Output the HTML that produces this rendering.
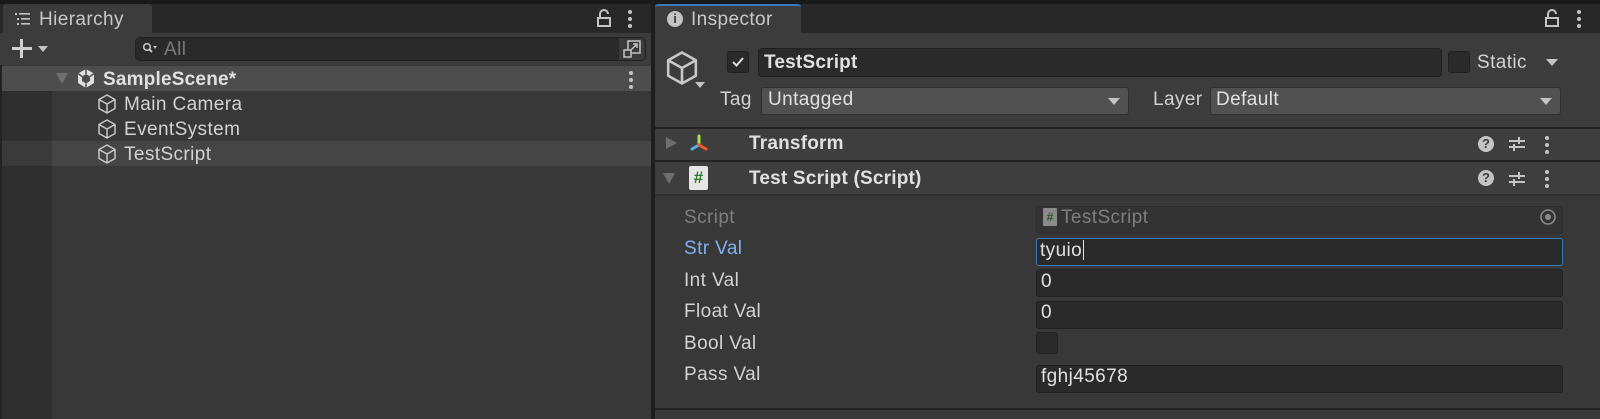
<!DOCTYPE html>
<html><head><meta charset="utf-8"><style>
*{box-sizing:border-box;margin:0;padding:0}
body{width:1600px;height:419px;background:#191919;position:relative;overflow:hidden;font-family:"Liberation Sans",sans-serif;color:#d2d2d2;font-size:19px;letter-spacing:0.4px}
.a{position:absolute}
.t{position:absolute;white-space:nowrap;line-height:1}
.fld{position:absolute;background:#2a2a2a;border:1px solid #212121;border-radius:3px}
.dd{position:absolute;background:#515151;border:1px solid #303030;border-radius:3px}
.tri{position:absolute;width:0;height:0;border-left:6px solid transparent;border-right:6px solid transparent;border-top:7px solid #c4c4c4}
.dots{position:absolute;width:4px}
.dots i{display:block;width:4px;height:4px;border-radius:2px;background:#c4c4c4;margin-bottom:3px}
</style></head><body>
<div class="a" style="left:0;top:4px;width:651px;height:29px;background:#282828"></div>
<div class="a" style="left:3px;top:4px;width:149px;height:30px;background:#3c3c3c;border-radius:3px 3px 0 0"></div>
<svg class="a" style="left:14px;top:11px" width="18" height="16" viewBox="0 0 18 16"><g fill="#c4c4c4"><rect x="1" y="2" width="2" height="2"/><rect x="5" y="2" width="11" height="1.6"/><rect x="3" y="7" width="2" height="2"/><rect x="7" y="7" width="9" height="1.6"/><rect x="3" y="12" width="2" height="2"/><rect x="7" y="12" width="9" height="1.6"/></g></svg>
<div class="t" style="left:39px;top:10px;color:#c8c8c8">Hierarchy</div>
<svg class="a" style="left:596px;top:9px" width="16" height="18" viewBox="0 0 16 18"><path d="M4 8V5a4 4 0 0 1 8 0" fill="none" stroke="#c4c4c4" stroke-width="2"/><rect x="2" y="9" width="12" height="8" fill="none" stroke="#c4c4c4" stroke-width="2"/></svg>
<div class="dots" style="left:628px;top:10px"><i></i><i></i><i></i></div>
<div class="a" style="left:0;top:33px;width:651px;height:32px;background:#3c3c3c"></div>
<div class="a" style="left:12px;top:47px;width:20px;height:3px;background:#d0d0d0"></div>
<div class="a" style="left:20px;top:39px;width:3px;height:19px;background:#d0d0d0"></div>
<div class="tri" style="left:38px;top:46px;border-left-width:5px;border-right-width:5px;border-top-width:6px"></div>
<div class="fld" style="left:135px;top:37px;width:511px;height:24px;border-radius:5px;background:#2a2a2a"></div>
<svg class="a" style="left:142px;top:42px" width="16" height="14" viewBox="0 0 16 14"><circle cx="5" cy="5" r="3.3" fill="none" stroke="#c4c4c4" stroke-width="1.6"/><path d="M7.5 7.5L10 10" stroke="#c4c4c4" stroke-width="2"/><path d="M11 4h4l-2 3z" fill="#c4c4c4"/></svg>
<div class="t" style="left:164px;top:40px;color:#7a7a7a">All</div>
<div class="a" style="left:619px;top:38px;width:26px;height:22px;background:#3a3a3a;border-radius:0 4px 4px 0"></div>
<svg class="a" style="left:622px;top:39px" width="20" height="20" viewBox="0 0 20 20"><rect x="6" y="2" width="12" height="12" fill="none" stroke="#c4c4c4" stroke-width="1.5"/><rect x="2" y="11" width="7" height="7" fill="#3a3a3a" stroke="#c4c4c4" stroke-width="1.5"/><path d="M9 11l6-6M11 5h4v4" fill="none" stroke="#c4c4c4" stroke-width="1.5"/></svg>
<div class="a" style="left:0;top:65px;width:651px;height:354px;background:#383838"></div>
<div class="a" style="left:0;top:65px;width:2px;height:354px;background:#232323"></div>
<div class="a" style="left:2px;top:91px;width:50px;height:328px;background:#2f2f2f"></div>
<div class="a" style="left:2px;top:66px;width:649px;height:25px;background:#4d4d4d"></div>
<div class="a" style="left:52px;top:141px;width:599px;height:25px;background:#454545"></div>
<div class="a" style="left:2px;top:141px;width:50px;height:25px;background:#3a3a3a"></div>
<div class="tri" style="left:56px;top:73px;border-left-width:6px;border-right-width:6px;border-top:11px solid #6e6e6e"></div>
<svg class="a" style="left:76px;top:68px" width="20" height="21" viewBox="0 0 20 21"><path d="M10 1L18 5.5V15L10 20 2 15V5.5Z" fill="#e0e0e0"/><path d="M10 6L14 8.5V13L10 15.5 6 13V8.5Z" fill="#4d4d4d"/><path d="M10 1v5M2 5.5l4 3M18 5.5l-4 3M10 15.5V20" stroke="#4d4d4d" stroke-width="1.5"/></svg>
<div class="t" style="left:103px;top:70px;font-weight:bold;color:#e0e0e0;letter-spacing:0.2px">SampleScene*</div>
<div class="dots" style="left:629px;top:71px"><i></i><i></i><i></i></div>
<svg width="0" height="0" style="position:absolute"><defs><symbol id="cube" viewBox="0 0 22 22"><path d="M11 2L19 6.5V15.5L11 20 3 15.5V6.5Z M3 6.5L11 11 19 6.5 M11 11V20" fill="none" stroke="#c8c8c8" stroke-width="1.5" stroke-linejoin="round"/></symbol></defs></svg>
<svg class="a" style="left:96px;top:93px" width="22" height="22"><use href="#cube"/></svg>
<div class="t" style="left:124px;top:95px">Main Camera</div>
<svg class="a" style="left:96px;top:118px" width="22" height="22"><use href="#cube"/></svg>
<div class="t" style="left:124px;top:120px">EventSystem</div>
<svg class="a" style="left:96px;top:143px" width="22" height="22"><use href="#cube"/></svg>
<div class="t" style="left:124px;top:145px">TestScript</div>
<div class="a" style="left:655px;top:4px;width:945px;height:29px;background:#282828"></div>
<div class="a" style="left:655px;top:4px;width:146px;height:30px;background:#3c3c3c;border-top:2px solid #3a79bb;border-radius:3px 3px 0 0"></div>
<div class="a" style="left:667px;top:11px;width:16px;height:16px;border-radius:8px;background:#c4c4c4;color:#3c3c3c;font-size:13px;font-weight:bold;text-align:center;line-height:16px;letter-spacing:0">i</div>
<div class="t" style="left:691px;top:10px;color:#c8c8c8">Inspector</div>
<svg class="a" style="left:1544px;top:9px" width="16" height="18" viewBox="0 0 16 18"><path d="M4 8V5a4 4 0 0 1 8 0" fill="none" stroke="#c4c4c4" stroke-width="2"/><rect x="2" y="9" width="12" height="8" fill="none" stroke="#c4c4c4" stroke-width="2"/></svg>
<div class="dots" style="left:1577px;top:10px"><i></i><i></i><i></i></div>
<div class="a" style="left:655px;top:33px;width:945px;height:94px;background:#3c3c3c"></div>
<svg class="a" style="left:663px;top:49px" width="38" height="38" viewBox="0 0 22 22"><use href="#cube"/></svg>
<div class="tri" style="left:695px;top:82px;border-left-width:5px;border-right-width:5px;border-top-width:6px"></div>
<div class="a" style="left:727px;top:51px;width:22px;height:22px;background:#2a2a2a;border:1px solid #212121;border-radius:3px"></div>
<svg class="a" style="left:731px;top:55px" width="14" height="14" viewBox="0 0 14 14"><path d="M2 7l3.5 3.5L12 3" fill="none" stroke="#e0e0e0" stroke-width="2"/></svg>
<div class="fld" style="left:758px;top:48px;width:684px;height:29px;border-radius:4px"></div>
<div class="t" style="left:764px;top:53px;font-weight:bold;color:#e0e0e0;letter-spacing:0.2px">TestScript</div>
<div class="a" style="left:1448px;top:51px;width:22px;height:22px;background:#2a2a2a;border:1px solid #212121;border-radius:3px"></div>
<div class="t" style="left:1477px;top:53px">Static</div>
<div class="tri" style="left:1546px;top:59px"></div>
<div class="t" style="left:720px;top:90px">Tag</div>
<div class="dd" style="left:761px;top:87px;width:368px;height:28px"></div>
<div class="t" style="left:768px;top:90px;color:#e0e0e0">Untagged</div>
<div class="tri" style="left:1108px;top:98px"></div>
<div class="t" style="left:1153px;top:90px">Layer</div>
<div class="dd" style="left:1210px;top:87px;width:351px;height:28px"></div>
<div class="t" style="left:1216px;top:90px;color:#e0e0e0">Default</div>
<div class="tri" style="left:1540px;top:98px"></div>
<div class="a" style="left:655px;top:127px;width:945px;height:2px;background:#232323"></div>
<div class="a" style="left:655px;top:129px;width:945px;height:31px;background:#3e3e3e"></div>
<div class="a" style="left:655px;top:160px;width:945px;height:2px;background:#232323"></div>
<div class="a" style="left:655px;top:162px;width:945px;height:32px;background:#3e3e3e"></div>
<div class="a" style="left:655px;top:194px;width:945px;height:2px;background:#2e2e2e"></div>
<div class="a" style="left:666px;top:137px;width:0;height:0;border-top:6px solid transparent;border-bottom:6px solid transparent;border-left:11px solid #6e6e6e"></div>
<svg class="a" style="left:688px;top:133px" width="22" height="22" viewBox="0 0 22 22"><path d="M11 3v7" stroke="#a6e04a" stroke-width="3" stroke-linecap="round"/><path d="M11 12l-7 4" stroke="#4fb6e6" stroke-width="3" stroke-linecap="round"/><path d="M11 12l7 4" stroke="#ef5a2e" stroke-width="3" stroke-linecap="round"/></svg>
<div class="t" style="left:749px;top:134px;font-weight:bold;color:#e0e0e0;letter-spacing:0.2px">Transform</div>
<div class="tri" style="left:663px;top:173px;border-top:11px solid #6e6e6e;border-left-width:6px;border-right-width:6px"></div>
<div class="a" style="left:689px;top:166px;width:19px;height:24px;background:#e6e6e6;border-radius:2px;color:#2a7a2a;font-weight:bold;font-size:17px;text-align:center;line-height:24px;letter-spacing:0">#</div>
<div class="t" style="left:749px;top:169px;font-weight:bold;color:#e0e0e0;letter-spacing:0.2px">Test Script (Script)</div>
<div class="a" style="left:1478px;top:136px;width:16px;height:16px;border-radius:8px;background:#c4c4c4;color:#3e3e3e;font-size:13px;font-weight:bold;text-align:center;line-height:16px;letter-spacing:0">?</div>
<div class="a" style="left:1478px;top:170px;width:16px;height:16px;border-radius:8px;background:#c4c4c4;color:#3e3e3e;font-size:13px;font-weight:bold;text-align:center;line-height:16px;letter-spacing:0">?</div>
<svg class="a" style="left:1508px;top:135px" width="18" height="18" viewBox="0 0 18 18"><path d="M1 6h16M1 12h16M11 2v7M6 9v7" stroke="#c4c4c4" stroke-width="2"/></svg>
<svg class="a" style="left:1508px;top:170px" width="18" height="18" viewBox="0 0 18 18"><path d="M1 6h16M1 12h16M11 2v7M6 9v7" stroke="#c4c4c4" stroke-width="2"/></svg>
<div class="dots" style="left:1545px;top:136px"><i></i><i></i><i></i></div>
<div class="dots" style="left:1545px;top:170px"><i></i><i></i><i></i></div>
<div class="a" style="left:655px;top:196px;width:945px;height:213px;background:#383838"></div>
<div class="a" style="left:655px;top:408px;width:945px;height:2px;background:#232323"></div>
<div class="a" style="left:655px;top:410px;width:945px;height:9px;background:#383838"></div>
<div class="a" style="left:651px;top:0;width:4px;height:419px;background:#1e1e1e"></div>
<div class="t" style="left:684px;top:208px;color:#7e7e7e">Script</div>
<div class="t" style="left:684px;top:239px;color:#7fb1f0">Str Val</div>
<div class="t" style="left:684px;top:271px">Int Val</div>
<div class="t" style="left:684px;top:302px">Float Val</div>
<div class="t" style="left:684px;top:334px">Bool Val</div>
<div class="t" style="left:684px;top:365px">Pass Val</div>
<div class="fld" style="left:1036px;top:206px;width:527px;height:28px;background:#333333;border-color:#2c2c2c"></div>
<div class="a" style="left:1043px;top:208px;width:14px;height:18px;background:#8a8a8a;color:#2b5a2b;font-size:12px;font-weight:bold;text-align:center;line-height:18px;border-radius:1px;letter-spacing:0">#</div>
<div class="t" style="left:1061px;top:208px;color:#7e7e7e">TestScript</div>
<svg class="a" style="left:1538px;top:207px" width="20" height="20" viewBox="0 0 20 20"><circle cx="10" cy="10" r="7" fill="none" stroke="#8a8a8a" stroke-width="1.6"/><circle cx="10" cy="10" r="3" fill="#8a8a8a"/></svg>
<div class="fld" style="left:1036px;top:238px;width:527px;height:28px;border:1px solid #3a79bb"></div>
<div class="t" style="left:1040px;top:240px;color:#e0e0e0">tyuio<span style="display:inline-block;width:1px;height:20px;background:#e0e0e0;vertical-align:-4px;margin-left:1px"></span></div>
<div class="fld" style="left:1036px;top:269px;width:527px;height:28px"></div>
<div class="t" style="left:1041px;top:272px;color:#e0e0e0">0</div>
<div class="fld" style="left:1036px;top:301px;width:527px;height:28px"></div>
<div class="t" style="left:1041px;top:303px;color:#e0e0e0">0</div>
<div class="fld" style="left:1036px;top:332px;width:22px;height:22px"></div>
<div class="fld" style="left:1036px;top:365px;width:527px;height:28px"></div>
<div class="t" style="left:1041px;top:367px;color:#e0e0e0">fghj45678</div>
</body></html>
